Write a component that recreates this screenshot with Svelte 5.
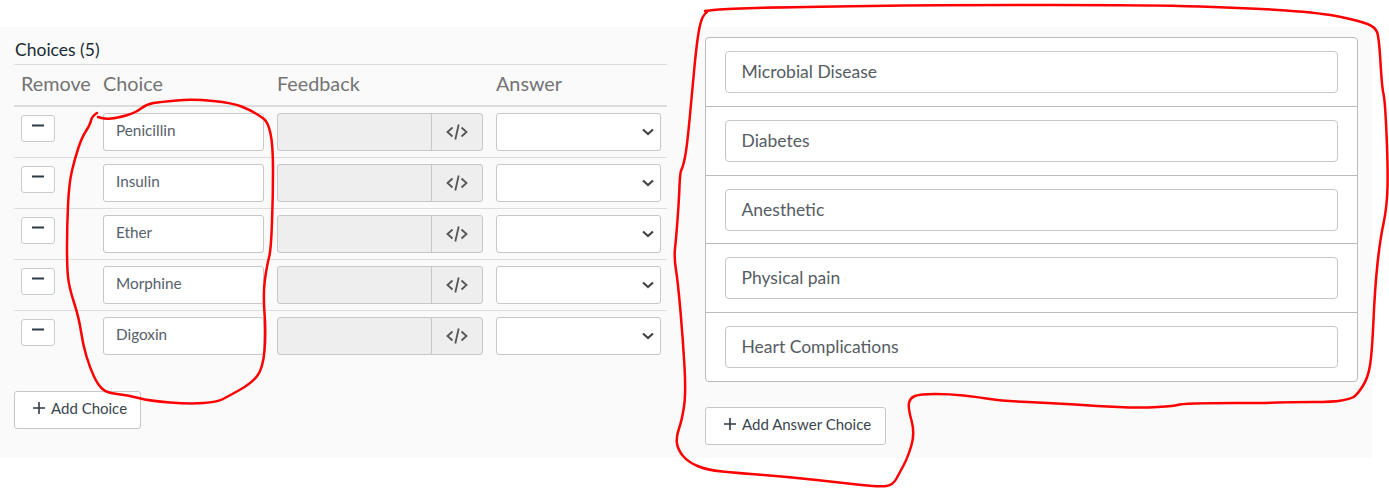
<script lang="ts">
	const choices = ['Penicillin', 'Insulin', 'Ether', 'Morphine', 'Digoxin'];
	const answers = ['Microbial Disease', 'Diabetes', 'Anesthetic', 'Physical pain', 'Heart Complications'];

	// marker loops drawn over the form, traced as x,y pairs
	const loopLeft = [
		[97, 113], [92, 116], [90, 125], [82, 137], [75, 158], [69, 183], [67, 228], [67, 267], [69, 287],
		[79, 318], [83, 345], [90, 368], [98, 385], [107, 393], [127, 395], [150, 401], [190, 404], [217, 402],
		[227, 397], [252, 383], [263, 368], [266, 333], [263, 293], [267, 265], [271, 250], [273, 195], [273, 145],
		[268, 122], [260, 116], [250, 110], [233, 103], [193, 99], [160, 102], [147, 104], [135, 113], [117, 118],
		[105, 119], [98, 117]
	];
	const loopRight = [
		[707, 12], [702, 15], [697, 40], [692, 93], [687, 147], [683, 167], [680, 172], [679, 200], [676, 240],
		[674, 257], [678, 283], [683, 340], [686, 393], [682, 420], [676, 437], [678, 450], [688, 462], [707, 470],
		[737, 473], [790, 477], [843, 483], [880, 487], [893, 485], [900, 472], [908, 457], [915, 433], [908, 408],
		[910, 398], [920, 394], [950, 394], [977, 397], [1003, 401], [1053, 403], [1097, 406], [1140, 408],
		[1175, 406], [1180, 404], [1210, 403], [1263, 403], [1293, 402], [1333, 402], [1350, 399], [1357, 395],
		[1368, 378], [1372, 353], [1375, 287], [1380, 240], [1387, 207], [1388, 167], [1385, 100], [1382, 88],
		[1379, 37], [1375, 27], [1360, 21], [1322, 13], [1250, 8], [1150, 5], [950, 5], [790, 7], [722, 9], [705, 11]
	];

	function smooth(pts: number[][]) {
		let d = `M${pts[0][0]} ${pts[0][1]}`;
		for (let i = 1; i < pts.length - 1; i++) {
			const mx = (pts[i][0] + pts[i + 1][0]) / 2;
			const my = (pts[i][1] + pts[i + 1][1]) / 2;
			d += `Q${pts[i][0]} ${pts[i][1]} ${mx} ${my}`;
		}
		const last = pts[pts.length - 1];
		return d + `L${last[0]} ${last[1]}`;
	}
</script>

<div class="page">
	<main class="panel">
		<section class="left">
			<h2>Choices (5)</h2>
			<div class="row head">
				<span>Remove</span>
				<span>Choice</span>
				<span>Feedback</span>
				<span>Answer</span>
			</div>
			{#each choices as choice}
				<div class="row item">
					<div>
						<button class="minus" aria-label="Remove">
							<svg width="12" height="12" viewBox="0 0 12 12"><path d="M0 5.500h12" stroke="#2d3b45" stroke-width="2" /></svg>
						</button>
					</div>
					<div class="field">{choice}</div>
					<div class="feedback">
						<div class="feedback-input"></div>
						<div class="code">
							<svg width="22" height="18" viewBox="0 0 22 18" fill="none" stroke="#555" stroke-width="1.800">
								<path d="M6.500 4.500 1.500 9l5 4.500M15.500 4.500l5 4.500-5 4.500" />
								<path d="M12.700 1.500 9.300 16.500" />
							</svg>
						</div>
					</div>
					<div class="select">
						<svg width="12" height="8" viewBox="0 0 12 8" fill="none" stroke="#444" stroke-width="2.200"><path d="M1 1.500 6 6l5-4.500" /></svg>
					</div>
				</div>
			{/each}
			<button class="add add-choice">
				<svg width="12" height="12" viewBox="0 0 12 12"><path d="M6 0v12M0 6h12" stroke="#2d3b45" stroke-width="1.600" /></svg>
				Add Choice
			</button>
		</section>

		<section class="right">
			<div class="box">
				{#each answers as answer}
					<div class="answer-row">
						<div class="field big">{answer}</div>
					</div>
				{/each}
			</div>
			<button class="add add-answer">
				<svg width="12" height="12" viewBox="0 0 12 12"><path d="M6 0v12M0 6h12" stroke="#2d3b45" stroke-width="1.600" /></svg>
				Add Answer Choice
			</button>
		</section>
	</main>

	<svg class="ink" width="1389" height="488" viewBox="0 0 1389 488" fill="none" stroke="#ff0000" stroke-width="2.500" stroke-linejoin="round" stroke-linecap="round">
		<path d={smooth(loopLeft)} />
		<path d={smooth(loopRight)} />
	</svg>
</div>

<style>
	:global(body) {
		margin: 0;
		background: #fff;
		font-family: Lato, 'Open Sans', sans-serif;
	}

	.page {
		position: relative;
		width: 1389px;
		height: 488px;
		padding-top: 27px;
		box-sizing: border-box;
		overflow: hidden;
	}

	.panel {
		box-sizing: border-box;
		width: 1372px;
		height: 431px;
		background: #fafafa;
		display: flex;
		padding: 10px 14px 0;
		gap: 38px;
	}

	.left,
	.right {
		width: 653px;
		flex: none;
	}

	h2 {
		margin: 0;
		height: 28px;
		box-sizing: border-box;
		padding-top: 3px;
		padding-left: 1px;
		font-size: 17.500px;
		line-height: 20px;
		font-weight: 400;
		color: #1b2a36;
		border-bottom: 1px solid #dcdcdc;
	}

	.row {
		display: grid;
		grid-template-columns: 69px 161px 206px 165px;
		column-gap: 13px;
		padding-left: 7px;
	}

	.head {
		height: 42px;
		box-sizing: border-box;
		padding-bottom: 4px;
		align-items: center;
		font-size: 19.800px;
		color: #737373;
		border-bottom: 2px solid #dcdcdc;
	}

	.item {
		height: 51px;
		box-sizing: border-box;
		padding-top: 6px;
		border-bottom: 1px solid #dcdcdc;
	}

	.item:nth-last-child(2) {
		border-bottom: 0;
	}

	.minus {
		width: 34px;
		height: 27px;
		margin-top: 2px;
		padding: 0 0 5px;
		display: flex;
		align-items: center;
		justify-content: center;
		background: #fff;
		border: 1px solid #c7cdd1;
		border-radius: 3px;
	}

	.field {
		box-sizing: border-box;
		height: 38px;
		padding: 0 12px 5px;
		display: flex;
		align-items: center;
		font-size: 15.300px;
		color: #56606b;
		background: #fff;
		border: 1px solid #c7c7c7;
		border-radius: 3px;
	}

	.field.big {
		height: 42px;
		padding: 0 15.500px 1px;
		font-size: 17.500px;
		color: #555c63;
		border-radius: 4px;
	}

	.feedback {
		display: flex;
		height: 38px;
		box-sizing: border-box;
		background: #eeeeee;
		border: 1px solid #c7c7c7;
		border-radius: 3px;
	}

	.feedback-input {
		flex: 1;
	}

	.code {
		width: 50px;
		display: flex;
		align-items: center;
		justify-content: center;
		border-left: 1px solid #c7c7c7;
	}

	.select {
		box-sizing: border-box;
		height: 38px;
		padding-right: 6px;
		display: flex;
		align-items: center;
		justify-content: flex-end;
		background: #fff;
		border: 1px solid #c7c7c7;
		border-radius: 3px;
	}

	.add {
		box-sizing: border-box;
		height: 38px;
		display: flex;
		align-items: center;
		gap: 6px;
		padding: 0 0 4px 18px;
		font-family: inherit;
		font-size: 15px;
		color: #39444d;
		background: #fff;
		border: 1px solid #c7c7c7;
		border-radius: 3px;
	}

	.add-choice {
		width: 127px;
		margin-top: 29px;
	}

	.box {
		box-sizing: border-box;
		height: 345px;
		background: #fff;
		border: 1px solid #bbbbbb;
		border-radius: 4px;
	}

	.answer-row {
		box-sizing: border-box;
		height: 68.750px;
		padding: 13px 19px 0;
		border-bottom: 1px solid #bbbbbb;
	}

	.answer-row:last-child {
		border-bottom: 0;
	}

	.add-answer {
		width: 181px;
		margin-top: 25px;
	}

	.ink {
		position: absolute;
		left: 0;
		top: 0;
		pointer-events: none;
	}
</style>
